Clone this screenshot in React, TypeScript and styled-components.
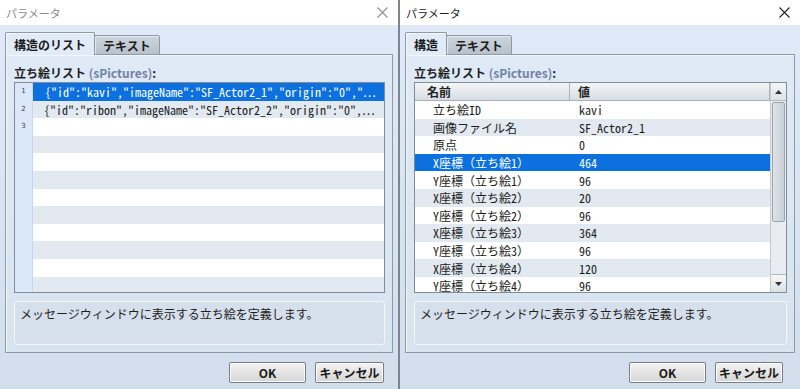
import * as React from 'react';
import styled, { createGlobalStyle } from 'styled-components';

const GlobalStyle = createGlobalStyle`
  html, body {
    margin: 0;
    padding: 0;
    background: #dfe9f6;
  }
  body {
    font-family: 'Noto Sans CJK JP', 'Noto Sans', sans-serif;
    font-size: 12px;
    color: #1e1e1e;
  }
`;

const MONO = `'Noto Sans Mono CJK JP', 'Noto Sans CJK JP', 'DejaVu Sans Mono', monospace`;

const Screen = styled.div`
  display: flex;
  width: 800px;
  height: 389px;
  overflow: hidden;
`;

const Dialog = styled.div<{ $active?: boolean }>`
  width: ${(p) => (p.$active ? '400px' : '398px')};
  height: 389px;
  display: flex;
  flex-direction: column;
  border-right: ${(p) => (p.$active ? 'none' : '2px solid #7c8590')};
  background: linear-gradient(#e0eaf8, #d3deec);
`;

const TitleBar = styled.div<{ $active?: boolean }>`
  height: 25px;
  flex: none;
  display: flex;
  align-items: center;
  justify-content: space-between;
  padding: 0 10px 0 6px;
  background: #ffffff;
  color: ${(p) => (p.$active ? '#222' : '#8a8a8a')};
  font-size: 11px;
`;

const CloseIcon = styled.svg<{ $active?: boolean }>`
  width: 11px;
  height: 11px;
  stroke: ${(p) => (p.$active ? '#222' : '#8f8f8f')};
  stroke-width: 1.1;
`;

const Body = styled.div`
  flex: 1;
  display: flex;
  flex-direction: column;
  padding: 8px 5px 6px 5px;
`;

const TabRow = styled.div`
  display: flex;
  align-items: flex-end;
  height: 22px;
  flex: none;
  position: relative;
  z-index: 1;
  margin-bottom: -1px;
`;

const Tab = styled.div<{ $active?: boolean }>`
  height: ${(p) => (p.$active ? '23px' : '20px')};
  box-sizing: border-box;
  padding: 0 8px;
  display: flex;
  align-items: center;
  font-weight: 700;
  font-size: 12px;
  color: #1c1c1c;
  border: 1px solid #8e99a6;
  border-bottom: ${(p) => (p.$active ? 'none' : '1px solid #8e99a6')};
  border-radius: 2px 2px 0 0;
  background: ${(p) => (p.$active ? '#e1ebf8' : 'linear-gradient(#ccd4dd, #b9c2cc)')};
  margin-left: ${(p) => (p.$active ? '0' : '-1px')};
  box-shadow: ${(p) => (p.$active ? 'inset 1px 1px 0 #f6f9fd' : 'inset 1px 1px 0 #e3e8ee')};
`;

const Panel = styled.div`
  height: 299px;
  box-sizing: border-box;
  border: 1px solid #8e99a6;
  box-shadow: inset 1px 1px 0 #f3f7fc;
  background: linear-gradient(#e0eaf7, #d8e3f0);
  padding: 9px 7px 7px 8px;
  display: flex;
  flex-direction: column;
`;

const FieldLabel = styled.div`
  font-weight: 700;
  font-size: 12px;
  height: 18px;
  line-height: 18px;
  color: #1e1e1e;
`;

const Hint = styled.span`
  color: #7282a6;
`;

const ListBox = styled.div`
  height: 211px;
  box-sizing: border-box;
  border: 1px solid #828b96;
  background: #ffffff;
  display: flex;
  overflow: hidden;
`;

const Gutter = styled.div`
  width: 17px;
  flex: none;
  background: #dbe8fb;
  border-right: 1px solid #c9d6e8;
`;

const LineNo = styled.div`
  height: 17.6px;
  font-family: 'DejaVu Sans', sans-serif;
  font-size: 7px;
  line-height: 17.6px;
  text-align: center;
  color: #3c3c3c;
`;

const Rows = styled.div`
  flex: 1;
  min-width: 0;
  display: flex;
  flex-direction: column;
`;

const Row = styled.div<{ $kind: 'sel' | 'odd' | 'even' }>`
  height: 17.6px;
  flex: none;
  display: flex;
  align-items: center;
  white-space: nowrap;
  overflow: hidden;
  font-family: ${MONO};
  font-size: 12px;
  color: ${(p) => (p.$kind === 'sel' ? '#ffffff' : '#1c1c1c')};
  background: ${(p) => (p.$kind === 'sel' ? '#0c71df' : p.$kind === 'odd' ? '#e2e9f0' : '#ffffff')};
`;

const CodeText = styled.span<{ $indent: number }>`
  padding-left: ${(p) => p.$indent}px;
`;

const Table = styled.div`
  flex: 1;
  min-width: 0;
  display: flex;
  flex-direction: column;
`;

const HeadRow = styled.div`
  height: 17px;
  flex: none;
  display: flex;
  background: linear-gradient(#f4f6f8, #d6dce3);
  border-bottom: 1px solid #a9b2bd;
  font-size: 12px;
  font-weight: 700;
  color: #222;
`;

const HeadCell = styled.div<{ $w?: number; $pad: number }>`
  ${(p) => (p.$w ? `width: ${p.$w}px; flex: none;` : 'flex: 1;')}
  box-sizing: border-box;
  padding-left: ${(p) => p.$pad}px;
  line-height: 17px;
  border-right: 1px solid #a9b2bd;
`;

const NameCell = styled.div`
  width: 155px;
  flex: none;
  box-sizing: border-box;
  padding-left: 18px;
`;

const ValueCell = styled.div`
  flex: 1;
  padding-left: 9px;
`;

const ScrollBar = styled.div`
  width: 15px;
  flex: none;
  display: flex;
  flex-direction: column;
  background: #e9edf1;
  border-left: 1px solid #c3cad3;
`;

const ArrowBtn = styled.div`
  height: 17px;
  flex: none;
  display: flex;
  align-items: center;
  justify-content: center;
  background: linear-gradient(#f5f6f7, #dde2e7);
  border-bottom: 1px solid #b0b8c2;
  &:last-child {
    border-bottom: none;
    border-top: 1px solid #b0b8c2;
  }
`;

const Track = styled.div`
  flex: 1;
  padding: 1px 1px;
`;

const Thumb = styled.div`
  height: 120px;
  box-sizing: border-box;
  border: 1px solid #9aa3ad;
  border-radius: 2px;
  background: linear-gradient(90deg, #dfe3e8, #c9cfd6);
`;

const Description = styled.div`
  margin-top: 8px;
  height: 44px;
  box-sizing: border-box;
  border: 1px solid #f3f7fb;
  border-radius: 3px;
  background: #d6e0ed;
  padding: 3px 5px;
  font-size: 12px;
  line-height: 18px;
  color: #1e1e1e;
`;

const Footer = styled.div<{ $right: number }>`
  flex: 1;
  display: flex;
  justify-content: flex-end;
  align-items: flex-end;
  gap: 9px;
  padding-right: ${(p) => p.$right}px;
`;

const Button = styled.button<{ $w: number }>`
  width: ${(p) => p.$w}px;
  height: 21px;
  box-sizing: border-box;
  border: 1px solid #777e87;
  border-radius: 2px;
  background: linear-gradient(#f4f4f4, #e4e4e4 50%, #d6d6d6);
  box-shadow: inset 0 0 0 1px #fbfbfb;
  font-family: 'Noto Sans CJK JP', sans-serif;
  font-weight: 700;
  font-size: 12px;
  color: #1a1a1a;
  padding: 0;
  line-height: 19px;
`;

const Close = ({ active }: { active?: boolean }) => (
  <CloseIcon $active={active} viewBox="0 0 11 11" fill="none">
    <path d="M0.5 0.5 L10.5 10.5 M10.5 0.5 L0.5 10.5" />
  </CloseIcon>
);

const leftRows = [
  '{"id":"kavi","imageName":"SF_Actor2_1","origin":"0","…',
  '{"id":"ribon","imageName":"SF_Actor2_2","origin":"0",…',
];

const props: [string, string][] = [
  ['立ち絵ID', 'kavi'],
  ['画像ファイル名', 'SF_Actor2_1'],
  ['原点', '0'],
  ['X座標（立ち絵1）', '464'],
  ['Y座標（立ち絵1）', '96'],
  ['X座標（立ち絵2）', '20'],
  ['Y座標（立ち絵2）', '96'],
  ['X座標（立ち絵3）', '364'],
  ['Y座標（立ち絵3）', '96'],
  ['X座標（立ち絵4）', '120'],
  ['Y座標（立ち絵4）', '96'],
];

const kindOf = (i: number, sel: number): 'sel' | 'odd' | 'even' =>
  i === sel ? 'sel' : i % 2 === 1 ? 'odd' : 'even';

const Label = () => (
  <FieldLabel>
    立ち絵リスト <Hint>(sPictures)</Hint>:
  </FieldLabel>
);

const DESC = 'メッセージウィンドウに表示する立ち絵を定義します。';

const ListDialog = () => {
  const rows = Array.from({ length: 12 }, (_, i) => i);
  return (
    <Dialog>
      <TitleBar>
        <span>パラメータ</span>
        <Close />
      </TitleBar>
      <Body>
        <TabRow>
          <Tab $active>構造のリスト</Tab>
          <Tab>テキスト</Tab>
        </TabRow>
        <Panel>
          <Label />
          <ListBox>
            <Gutter>
              {[1, 2, 3].map((n) => (
                <LineNo key={n}>{n}</LineNo>
              ))}
            </Gutter>
            <Rows>
              {rows.map((i) => (
                <Row key={i} $kind={kindOf(i, 0)}>
                  {leftRows[i] && <CodeText $indent={i === 0 ? 12 : 11}>{leftRows[i]}</CodeText>}
                </Row>
              ))}
            </Rows>
          </ListBox>
          <Description>{DESC}</Description>
        </Panel>
        <Footer $right={9}>
          <Button $w={77}>OK</Button>
          <Button $w={69}>キャンセル</Button>
        </Footer>
      </Body>
    </Dialog>
  );
};

const StructDialog = () => (
  <Dialog $active>
    <TitleBar $active>
      <span>パラメータ</span>
      <Close active />
    </TitleBar>
    <Body>
      <TabRow>
        <Tab $active>構造</Tab>
        <Tab>テキスト</Tab>
      </TabRow>
      <Panel>
        <Label />
        <ListBox>
          <Table>
            <HeadRow>
              <HeadCell $w={155} $pad={12}>名前</HeadCell>
              <HeadCell $pad={8}>値</HeadCell>
            </HeadRow>
            {props.map(([name, value], i) => (
              <Row key={name} $kind={kindOf(i, 3)}>
                <NameCell>{name}</NameCell>
                <ValueCell>{value}</ValueCell>
              </Row>
            ))}
          </Table>
          <ScrollBar>
            <ArrowBtn>
              <svg width="7" height="4" viewBox="0 0 7 4">
                <path d="M0 4 L3.5 0 L7 4 Z" fill="#333" />
              </svg>
            </ArrowBtn>
            <Track>
              <Thumb />
            </Track>
            <ArrowBtn>
              <svg width="7" height="4" viewBox="0 0 7 4">
                <path d="M0 0 L3.5 4 L7 0 Z" fill="#333" />
              </svg>
            </ArrowBtn>
          </ScrollBar>
        </ListBox>
        <Description>{DESC}</Description>
      </Panel>
      <Footer $right={12}>
        <Button $w={77}>OK</Button>
        <Button $w={68}>キャンセル</Button>
      </Footer>
    </Body>
  </Dialog>
);

export default function App() {
  return (
    <>
      <GlobalStyle />
      <Screen>
        <ListDialog />
        <StructDialog />
      </Screen>
    </>
  );
}
